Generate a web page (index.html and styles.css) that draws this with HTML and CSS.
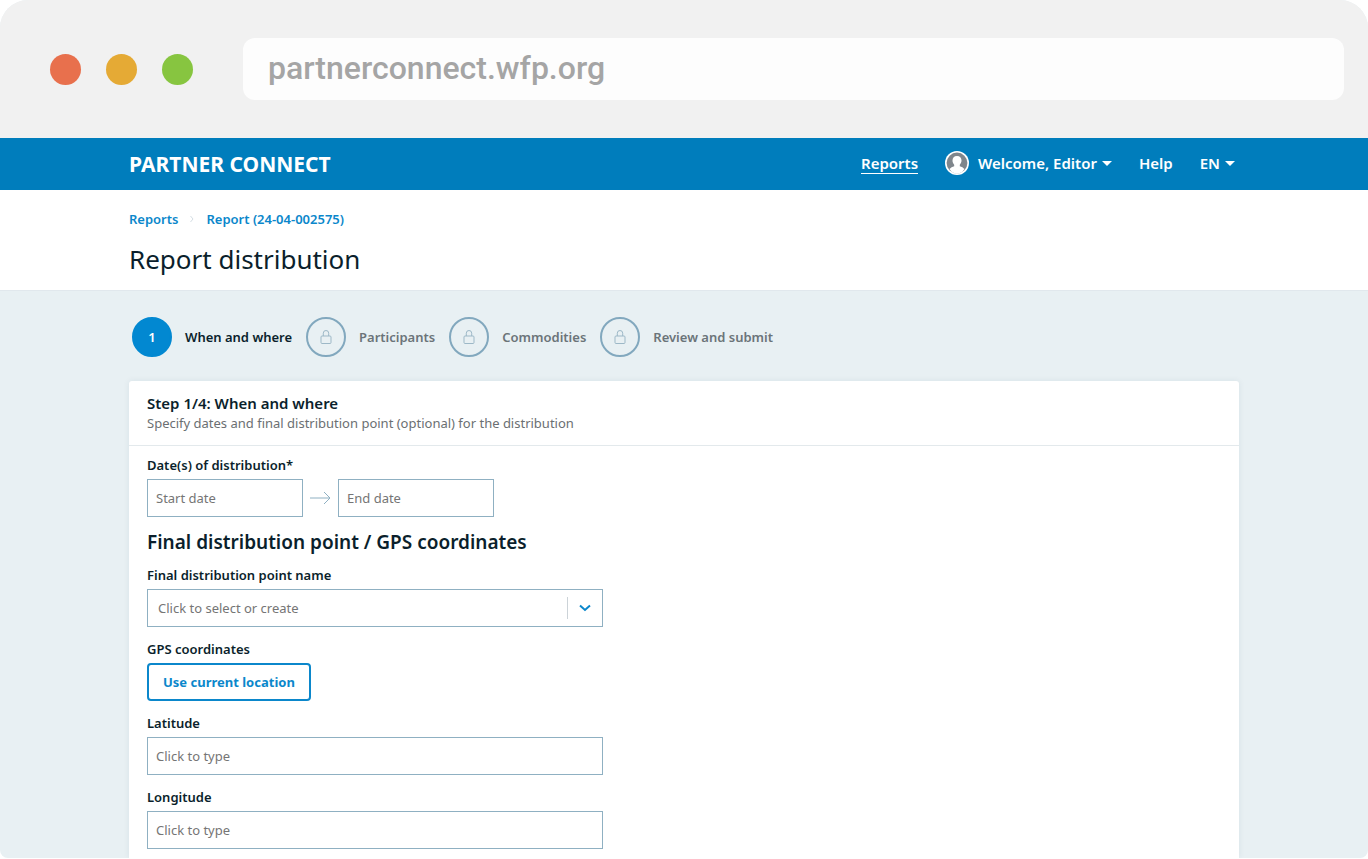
FILE: index.html
```html
<!DOCTYPE html>
<html lang="en">
<head>
  <meta charset="UTF-8">
  <meta name="viewport" content="width=device-width, initial-scale=1">
  <title>Partner Connect - Report distribution</title>
  <link rel="stylesheet" href="styles.css">
</head>
<body>
<div class="window">
  <!-- browser bar -->
  <div class="browser-bar">
    <div class="dots">
      <span class="dot dot-red"></span>
      <span class="dot dot-yellow"></span>
      <span class="dot dot-green"></span>
    </div>
    <div class="address">partnerconnect.wfp.org</div>
  </div>

  <!-- top navigation -->
  <header class="navbar">
    <div class="container navbar-inner">
      <a class="brand" href="#">PARTNER CONNECT</a>
      <nav class="nav">
        <a class="active" href="#">Reports</a>
        <button type="button" class="nav-btn">
          <svg class="avatar" viewBox="0 0 24 24" aria-hidden="true">
            <circle cx="12" cy="12" r="12" fill="#fff"/>
            <circle cx="12" cy="12" r="10.4" fill="#7f868c"/>
            <path d="M12 5c-2.900 0-4.500 2-4.500 4.600 0 1.700.7 3.200 1.700 4.100v1.500c-1.700.5-3.700 1.400-4.700 2.900C6.200 21 9 22.700 12 22.700s5.800-1.700 7.500-4.600c-1-1.500-3-2.400-4.700-2.900v-1.500c1-.9 1.700-2.400 1.700-4.100C16.500 7 14.900 5 12 5z" fill="#fff"/>
          </svg>
          <span>Welcome, Editor</span>
          <span class="caret"></span>
        </button>
        <a href="#">Help</a>
        <button type="button" class="nav-btn">
          <span>EN</span>
          <span class="caret"></span>
        </button>
      </nav>
    </div>
  </header>

  <!-- breadcrumb + title -->
  <div class="page-head">
    <div class="container">
      <div class="breadcrumb">
        <a href="#">Reports</a>
        <svg class="crumb-sep" viewBox="0 0 4 8" aria-hidden="true"><path d="M.5 1l2.500 3-2.500 3" fill="none" stroke="#d3dde3"/></svg>
        <a href="#">Report (24-04-002575)</a>
      </div>
      <h1>Report distribution</h1>
    </div>
  </div>

  <main class="container">
    <ol class="steps">
      <li class="step current"><span class="step-icon">1</span>When and where</li>
      <li class="step">
        <span class="step-icon"><svg class="lock" viewBox="0 0 12 16" aria-hidden="true"><rect x="1" y="7" width="10" height="7.500" rx="1"/><path d="M3.300 7V4.200a2.700 2.700 0 0 1 5.400 0V7"/></svg></span>
        Participants
      </li>
      <li class="step">
        <span class="step-icon"><svg class="lock" viewBox="0 0 12 16" aria-hidden="true"><rect x="1" y="7" width="10" height="7.500" rx="1"/><path d="M3.300 7V4.200a2.700 2.700 0 0 1 5.400 0V7"/></svg></span>
        Commodities
      </li>
      <li class="step">
        <span class="step-icon"><svg class="lock" viewBox="0 0 12 16" aria-hidden="true"><rect x="1" y="7" width="10" height="7.500" rx="1"/><path d="M3.300 7V4.200a2.700 2.700 0 0 1 5.400 0V7"/></svg></span>
        Review and submit
      </li>
    </ol>

    <section class="card">
      <div class="card-head">
        <h2>Step 1/4: When and where</h2>
        <p>Specify dates and final distribution point (optional) for the distribution</p>
      </div>

      <form class="card-body">
        <div class="field">
          <label for="start-date">Date(s) of distribution*</label>
          <div class="date-range">
            <input type="text" id="start-date" class="input" placeholder="Start date">
            <svg class="arrow" viewBox="0 0 21 14" aria-hidden="true"><path d="M0 7h20M14 1l6 6-6 6"/></svg>
            <input type="text" id="end-date" class="input" placeholder="End date" aria-label="End date">
          </div>
        </div>

        <h3>Final distribution point / GPS coordinates</h3>

        <div class="field">
          <label for="fdp">Final distribution point name</label>
          <div class="select-wrap">
            <select id="fdp" class="input">
              <option>Click to select or create</option>
            </select>
            <span class="select-arrow">
              <svg viewBox="0 0 12 8" aria-hidden="true"><path d="M1 1.500L6 6l5-4.500"/></svg>
            </span>
          </div>
        </div>

        <div class="field">
          <label for="locate">GPS coordinates</label>
          <button type="button" id="locate" class="btn-outline">Use current location</button>
        </div>

        <div class="field">
          <label for="latitude">Latitude</label>
          <input type="text" id="latitude" class="input" placeholder="Click to type">
        </div>

        <div class="field">
          <label for="longitude">Longitude</label>
          <input type="text" id="longitude" class="input" placeholder="Click to type">
        </div>
      </form>
    </section>
  </main>
</div>
</body>
</html>
```
FILE: styles.css
```css
* {
  box-sizing: border-box;
}

body {
  margin: 0;
  background: #fff;
  color: #0b1f2c;
  font-family: "Noto Sans", "Open Sans", sans-serif;
  font-size: 13px;
  line-height: 20px;
}

h1, h2, h3, p, ol {
  margin: 0;
  padding: 0;
}

a {
  text-decoration: none;
}

button, input, select {
  font: inherit;
}

.window {
  background: #e8f0f3;
  border-radius: 28px 28px 8px 8px;
  overflow: hidden;
}

.container {
  width: 100%;
  max-width: 1140px;
  margin: 0 auto;
  padding: 0 15px;
}

/* browser bar */
.browser-bar {
  display: flex;
  align-items: center;
  gap: 50px;
  height: 138px;
  padding: 0 24px 0 50px;
  background: #f1f1f1;
}

.dots {
  display: flex;
  gap: 25px;
}

.dot {
  width: 31px;
  height: 31px;
  border-radius: 50%;
}

.dot-red { background: #e8704d; }
.dot-yellow { background: #e5aa35; }
.dot-green { background: #87c540; }

.address {
  flex: 1;
  padding: 0 25px 2px;
  border-radius: 12px;
  background: #fdfdfd;
  color: #a5a5a5;
  font-family: Roboto, sans-serif;
  font-size: 32px;
  font-weight: 500;
  line-height: 60px;
}

/* top navigation */
.navbar {
  background: #007dbc;
}

.navbar-inner {
  display: flex;
  align-items: center;
  justify-content: space-between;
  height: 52px;
}

.brand {
  color: #fff;
  font-size: 21px;
  font-weight: 700;
}

.nav {
  display: flex;
  align-items: center;
  gap: 27px;
  padding: 0 4px 2px 0;
  font-size: 15px;
  font-weight: 600;
}

.nav a,
.nav-btn {
  color: #fff;
}

.nav .active {
  border-bottom: 1px solid #fff;
}

.nav-btn {
  display: flex;
  align-items: center;
  padding: 0;
  border: 0;
  background: none;
  cursor: pointer;
}

.avatar {
  width: 24px;
  height: 24px;
  margin-right: 9px;
}

.caret {
  margin-left: 5px;
  border-top: 5px solid #fff;
  border-left: 5px solid transparent;
  border-right: 5px solid transparent;
}

/* breadcrumb + title */
.page-head {
  padding: 19px 0 13px;
  border-bottom: 1px solid #e1e8ed;
  background: #fff;
}

.breadcrumb {
  display: flex;
  align-items: center;
  font-weight: 600;
}

.breadcrumb a {
  color: #0b87cb;
}

.crumb-sep {
  width: 4px;
  height: 8px;
  margin: 0 12px;
}

h1 {
  margin-top: 12px;
  font-size: 26px;
  font-weight: 400;
  line-height: 36px;
}

/* steps */
.steps {
  display: flex;
  gap: 14px;
  padding: 26px 3px 24px;
  list-style: none;
}

.step {
  display: flex;
  align-items: center;
  gap: 13px;
  color: #6b7479;
  font-weight: 600;
}

.step-icon {
  display: flex;
  align-items: center;
  justify-content: center;
  width: 40px;
  height: 40px;
  border: 2px solid #82a8be;
  border-radius: 50%;
}

.step.current {
  color: #0b1f2c;
}

.current .step-icon {
  border-color: #0288d1;
  background: #0288d1;
  color: #fff;
}

.lock {
  width: 12px;
  height: 16px;
  fill: none;
  stroke: #9db8c7;
}

/* card */
.card {
  border-radius: 3px 3px 0 0;
  background: #fff;
  box-shadow: 0 0 6px rgba(30, 60, 90, 0.08);
}

.card-head {
  padding: 12px 18px;
  border-bottom: 1px solid #e3e9ec;
}

.card-head h2 {
  font-size: 15px;
  font-weight: 600;
}

.card-head p {
  color: #6b6f72;
}

.card-body {
  padding: 9px 18px;
}

.field {
  display: flex;
  flex-direction: column;
  align-items: flex-start;
  gap: 4px;
  max-width: 456px;
  margin-bottom: 12px;
}

.field:last-child {
  margin-bottom: 0;
}

label {
  font-weight: 600;
}

.input {
  width: 100%;
  height: 38px;
  padding: 0 8px;
  border: 1px solid #8fb0c2;
  border-radius: 0;
  background: #fff;
  color: #757575;
}

.input::placeholder {
  color: #757575;
  opacity: 1;
}

.date-range {
  display: flex;
  align-items: center;
  gap: 7px;
}

.date-range .input {
  width: 156px;
}

.arrow {
  width: 21px;
  height: 14px;
  fill: none;
  stroke: #8fb0c2;
}

h3 {
  margin-bottom: 10px;
  font-size: 19px;
  font-weight: 600;
  line-height: 26px;
}

.select-wrap {
  position: relative;
  width: 100%;
}

.select-wrap select {
  display: block;
  padding: 0 10px;
  appearance: none;
}

/* chevron over the select */
.select-arrow {
  position: absolute;
  top: 8px;
  right: 1px;
  display: flex;
  align-items: center;
  justify-content: center;
  width: 35px;
  height: 22px;
  border-left: 1px solid #ccd3d8;
  pointer-events: none;
}

.select-arrow svg {
  width: 12px;
  height: 8px;
  fill: none;
  stroke: #0b87cb;
  stroke-width: 2;
}

.btn-outline {
  height: 38px;
  padding: 0 14px;
  border: 2px solid #0b87cb;
  border-radius: 4px;
  background: #fff;
  color: #0b87cb;
  font-weight: 700;
  cursor: pointer;
}
```
